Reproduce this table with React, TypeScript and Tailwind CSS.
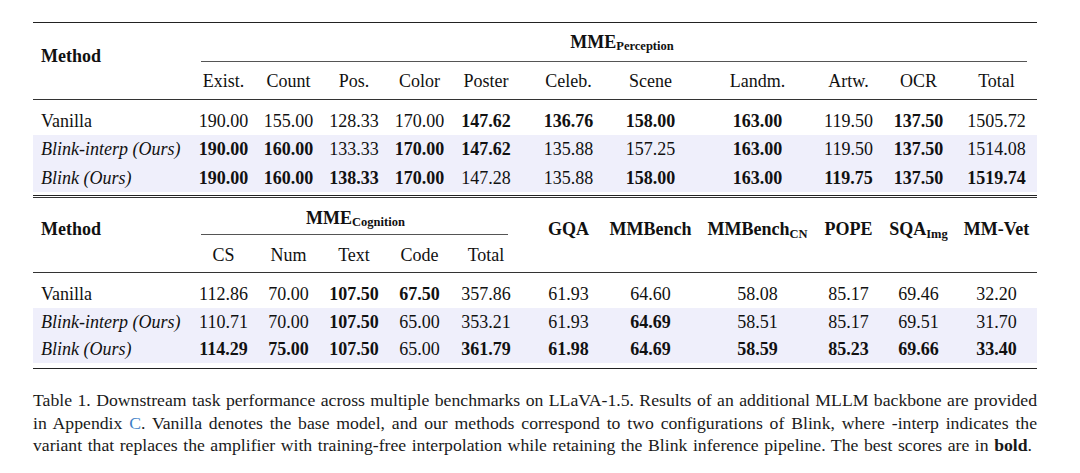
const cols =
  "grid grid-cols-[158px_65px_65px_66px_65px_68px_15px_67px_97px_117px_65px_75px_81px]"

type Row = { label: string; vals: string[]; shaded: boolean; italic: boolean }

// "*" marks a bold (best) score
const perceptionRows: Row[] = [
  {
    label: "Vanilla",
    vals: ["190.00", "155.00", "128.33", "170.00", "*147.62", "*136.76", "*158.00", "*163.00", "119.50", "*137.50", "1505.72"],
    shaded: false,
    italic: false,
  },
  {
    label: "Blink-interp (Ours)",
    vals: ["*190.00", "*160.00", "133.33", "*170.00", "*147.62", "135.88", "157.25", "*163.00", "119.50", "*137.50", "1514.08"],
    shaded: true,
    italic: true,
  },
  {
    label: "Blink (Ours)",
    vals: ["*190.00", "*160.00", "*138.33", "*170.00", "147.28", "135.88", "*158.00", "*163.00", "*119.75", "*137.50", "*1519.74"],
    shaded: true,
    italic: true,
  },
]

const cognitionRows: Row[] = [
  {
    label: "Vanilla",
    vals: ["112.86", "70.00", "*107.50", "*67.50", "357.86", "61.93", "64.60", "58.08", "85.17", "69.46", "32.20"],
    shaded: false,
    italic: false,
  },
  {
    label: "Blink-interp (Ours)",
    vals: ["110.71", "70.00", "*107.50", "65.00", "353.21", "61.93", "*64.69", "58.51", "85.17", "69.51", "31.70"],
    shaded: true,
    italic: true,
  },
  {
    label: "Blink (Ours)",
    vals: ["*114.29", "*75.00", "*107.50", "65.00", "*361.79", "*61.98", "*64.69", "*58.59", "*85.23", "*69.66", "*33.40"],
    shaded: true,
    italic: true,
  },
]

function Cell({ v }: { v: string }) {
  const bold = v.startsWith("*")
  return <div className={bold ? "text-center font-bold" : "text-center"}>{bold ? v.slice(1) : v}</div>
}

function DataRow({ row, tall }: { row: Row; tall: boolean }) {
  return (
    <div
      className={`${cols} items-center ${tall ? "h-[28.3px]" : "h-[27.7px]"} ${row.shaded ? "bg-[#efeffb]" : ""}`}
    >
      <div className={row.italic ? "pl-[8px] italic" : "pl-[8px]"}>{row.label}</div>
      {row.vals.slice(0, 5).map((v, i) => (
        <Cell key={i} v={v} />
      ))}
      <div />
      {row.vals.slice(5).map((v, i) => (
        <Cell key={i + 5} v={v} />
      ))}
    </div>
  )
}

function Sub({ children }: { children: string }) {
  return <span className="relative top-[2px] text-[12.5px]">{children}</span>
}

export default function App() {
  return (
    <div className="min-h-[473px] bg-white font-['Liberation_Serif',serif] text-[#111]">
      <div className="ml-[33px] w-[1004px] pt-[21.5px] text-[18px] leading-[20px]">
        {/* Table 1: MME perception */}
        <div className="h-[1.4px] bg-[#222]" />
        <div className={`${cols} grid-rows-[38.4px_1px_37px]`}>
          <div className="col-start-1 row-span-3 row-start-1 self-start pl-[8px] pt-[23.5px] font-bold">Method</div>
          <div className="col-span-12 col-start-2 row-start-1 self-start pl-[16px] pt-[9px] text-center font-bold">
            MME<Sub>Perception</Sub>
          </div>
          <div className="col-span-12 col-start-2 row-start-2 mx-[10px] h-[0.8px] self-center bg-[#555]" />
          {["Exist.", "Count", "Pos.", "Color", "Poster", "", "Celeb.", "Scene", "Landm.", "Artw.", "OCR", "Total"].map(
            (h, i) => (
              <div key={i} className="row-start-3 self-start pt-[9px] text-center">
                {h}
              </div>
            ),
          )}
        </div>
        <div className="h-[1px] bg-[#333]" />
        <div className="pt-[6.5px]">
          {perceptionRows.map((r) => (
            <DataRow key={r.label} row={r} tall />
          ))}
        </div>
        <div className="mt-[3px] h-[1.3px] bg-[#222]" />
        <div className="mt-[0.6px] h-[0.8px] bg-[#333]" />

        {/* Table 2: MME cognition and other benchmarks */}
        <div className={`${cols} grid-rows-[36.3px_1px_37.3px]`}>
          <div className="col-start-1 row-span-3 row-start-1 self-start pl-[8px] pt-[21.5px] font-bold">Method</div>
          <div className="col-span-5 col-start-2 row-start-1 self-start pt-[10.8px] text-center font-bold">
            MME<Sub>Cognition</Sub>
          </div>
          <div className="col-span-5 col-start-2 row-start-2 ml-[10px] mr-[12px] h-[0.8px] self-center bg-[#555]" />
          <div className="col-start-8 row-span-3 row-start-1 self-start pt-[21.5px] text-center font-bold">GQA</div>
          <div className="col-start-9 row-span-3 row-start-1 self-start pt-[21.5px] text-center font-bold">MMBench</div>
          <div className="col-start-10 row-span-3 row-start-1 self-start pt-[21.5px] text-center font-bold">
            MMBench<span className="relative top-[3px] text-[12.5px]">CN</span>
          </div>
          <div className="col-start-11 row-span-3 row-start-1 self-start pt-[21.5px] text-center font-bold">POPE</div>
          <div className="col-start-12 row-span-3 row-start-1 self-start pt-[21.5px] text-center font-bold">
            SQA<span className="relative top-[3px] text-[12.5px]">Img</span>
          </div>
          <div className="col-start-13 row-span-3 row-start-1 self-start pt-[21.5px] text-center font-bold">MM-Vet</div>
          {["CS", "Num", "Text", "Code", "Total"].map((h) => (
            <div key={h} className="row-start-3 self-start pt-[10.2px] text-center">
              {h}
            </div>
          ))}
        </div>
        <div className="h-[1px] bg-[#333]" />
        <div className="pt-[7.2px]">
          {cognitionRows.map((r) => (
            <DataRow key={r.label} row={r} tall={false} />
          ))}
        </div>
        <div className="mt-[4.5px] h-[1.3px] bg-[#222]" />

        {/* Caption: lines are set one by one, as in the typeset original */}
        <div className="mt-[20.3px] text-[17.7px] leading-[22.5px] text-[#1a1a1a]">
          <div className="text-justify [text-align-last:justify] [word-spacing:-2px]">
            Table 1. Downstream task performance across multiple benchmarks on LLaVA-1.5. Results of an additional MLLM
            backbone are provided
          </div>
          <div className="text-justify [text-align-last:justify] [word-spacing:-2px]">
            in Appendix <span className="text-[#3f7fc8]">C</span>. Vanilla denotes the base model, and our methods
            correspond to two configurations of Blink, where -interp indicates the
          </div>
          <div className="w-[999px] text-justify [text-align-last:justify] [word-spacing:-2px]">
            variant that replaces the amplifier with training-free interpolation while retaining the Blink inference
            pipeline. The best scores are in <span className="font-bold">bold</span>.
          </div>
        </div>
      </div>
    </div>
  )
}
